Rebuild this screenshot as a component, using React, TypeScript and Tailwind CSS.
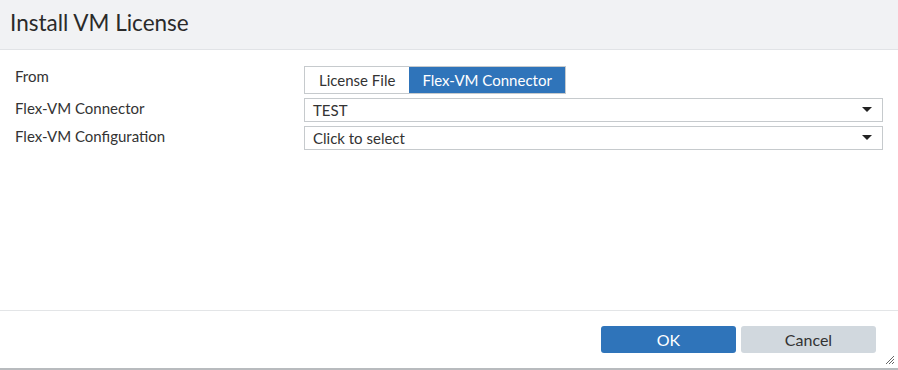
export default function App() {
  return (
    <div
      className="flex flex-col w-[898px] h-[370px] bg-white text-[#333] overflow-hidden"
      style={{ fontFamily: "Lato, 'Noto Sans', sans-serif" }}
    >
      <div className="h-[50px] shrink-0 bg-[#f1f2f4] border-b border-[#e1e3e6] flex items-center px-[10px]">
        <h1 className="text-[22.5px] leading-none text-[#2a2a2a] -mt-[2px]">Install VM License</h1>
      </div>

      <div className="flex-1 pt-4 pl-[15px] pr-[15px] flex flex-col gap-[4px] text-[15px]">
        <div className="flex items-center h-[28px]">
          <div className="w-[289px] -mt-[8px]">From</div>
          <div className="flex border border-[#c6cacd] h-[28px]">
            <button className="px-[14px] bg-white">License File</button>
            <button className="px-[13px] bg-[#2f74ba] text-white">Flex-VM Connector</button>
          </div>
        </div>
        <Row label="Flex-VM Connector" value="TEST" />
        <Row label="Flex-VM Configuration" value="Click to select" />
      </div>

      <div className="h-[58px] shrink-0 border-t border-[#e3e5e7] flex items-start justify-end gap-[5px] pt-[15px] pr-[22px] relative">
        <button className="w-[135px] h-[27px] rounded-[3px] bg-[#2f74ba] text-white text-[16px]">OK</button>
        <button className="w-[135px] h-[27px] rounded-[3px] bg-[#d1d8de] text-[#333] text-[16px]">Cancel</button>
        <svg className="absolute right-[4px] bottom-[4px]" width="8" height="8" viewBox="0 0 8 8">
          <path d="M8 0 L0 8 M8 3 L3 8 M8 6 L6 8" stroke="#666" strokeWidth="1" />
        </svg>
      </div>
      <div className="h-[2px] shrink-0 bg-[#b8bbbe]" />
    </div>
  );
}

function Row({ label, value }: { label: string; value: string }) {
  return (
    <div className="flex items-center h-[24px]">
      <div className="w-[289px] -mt-[3px]">{label}</div>
      <div className="flex-1 h-[24px] border border-[#c6cacd] flex items-center justify-between pl-[8px] pr-[10px]">
        <span>{value}</span>
        <svg width="10" height="6" viewBox="0 0 10 6">
          <path d="M0 0 H10 L5 5 Z" fill="#222" />
        </svg>
      </div>
    </div>
  );
}
